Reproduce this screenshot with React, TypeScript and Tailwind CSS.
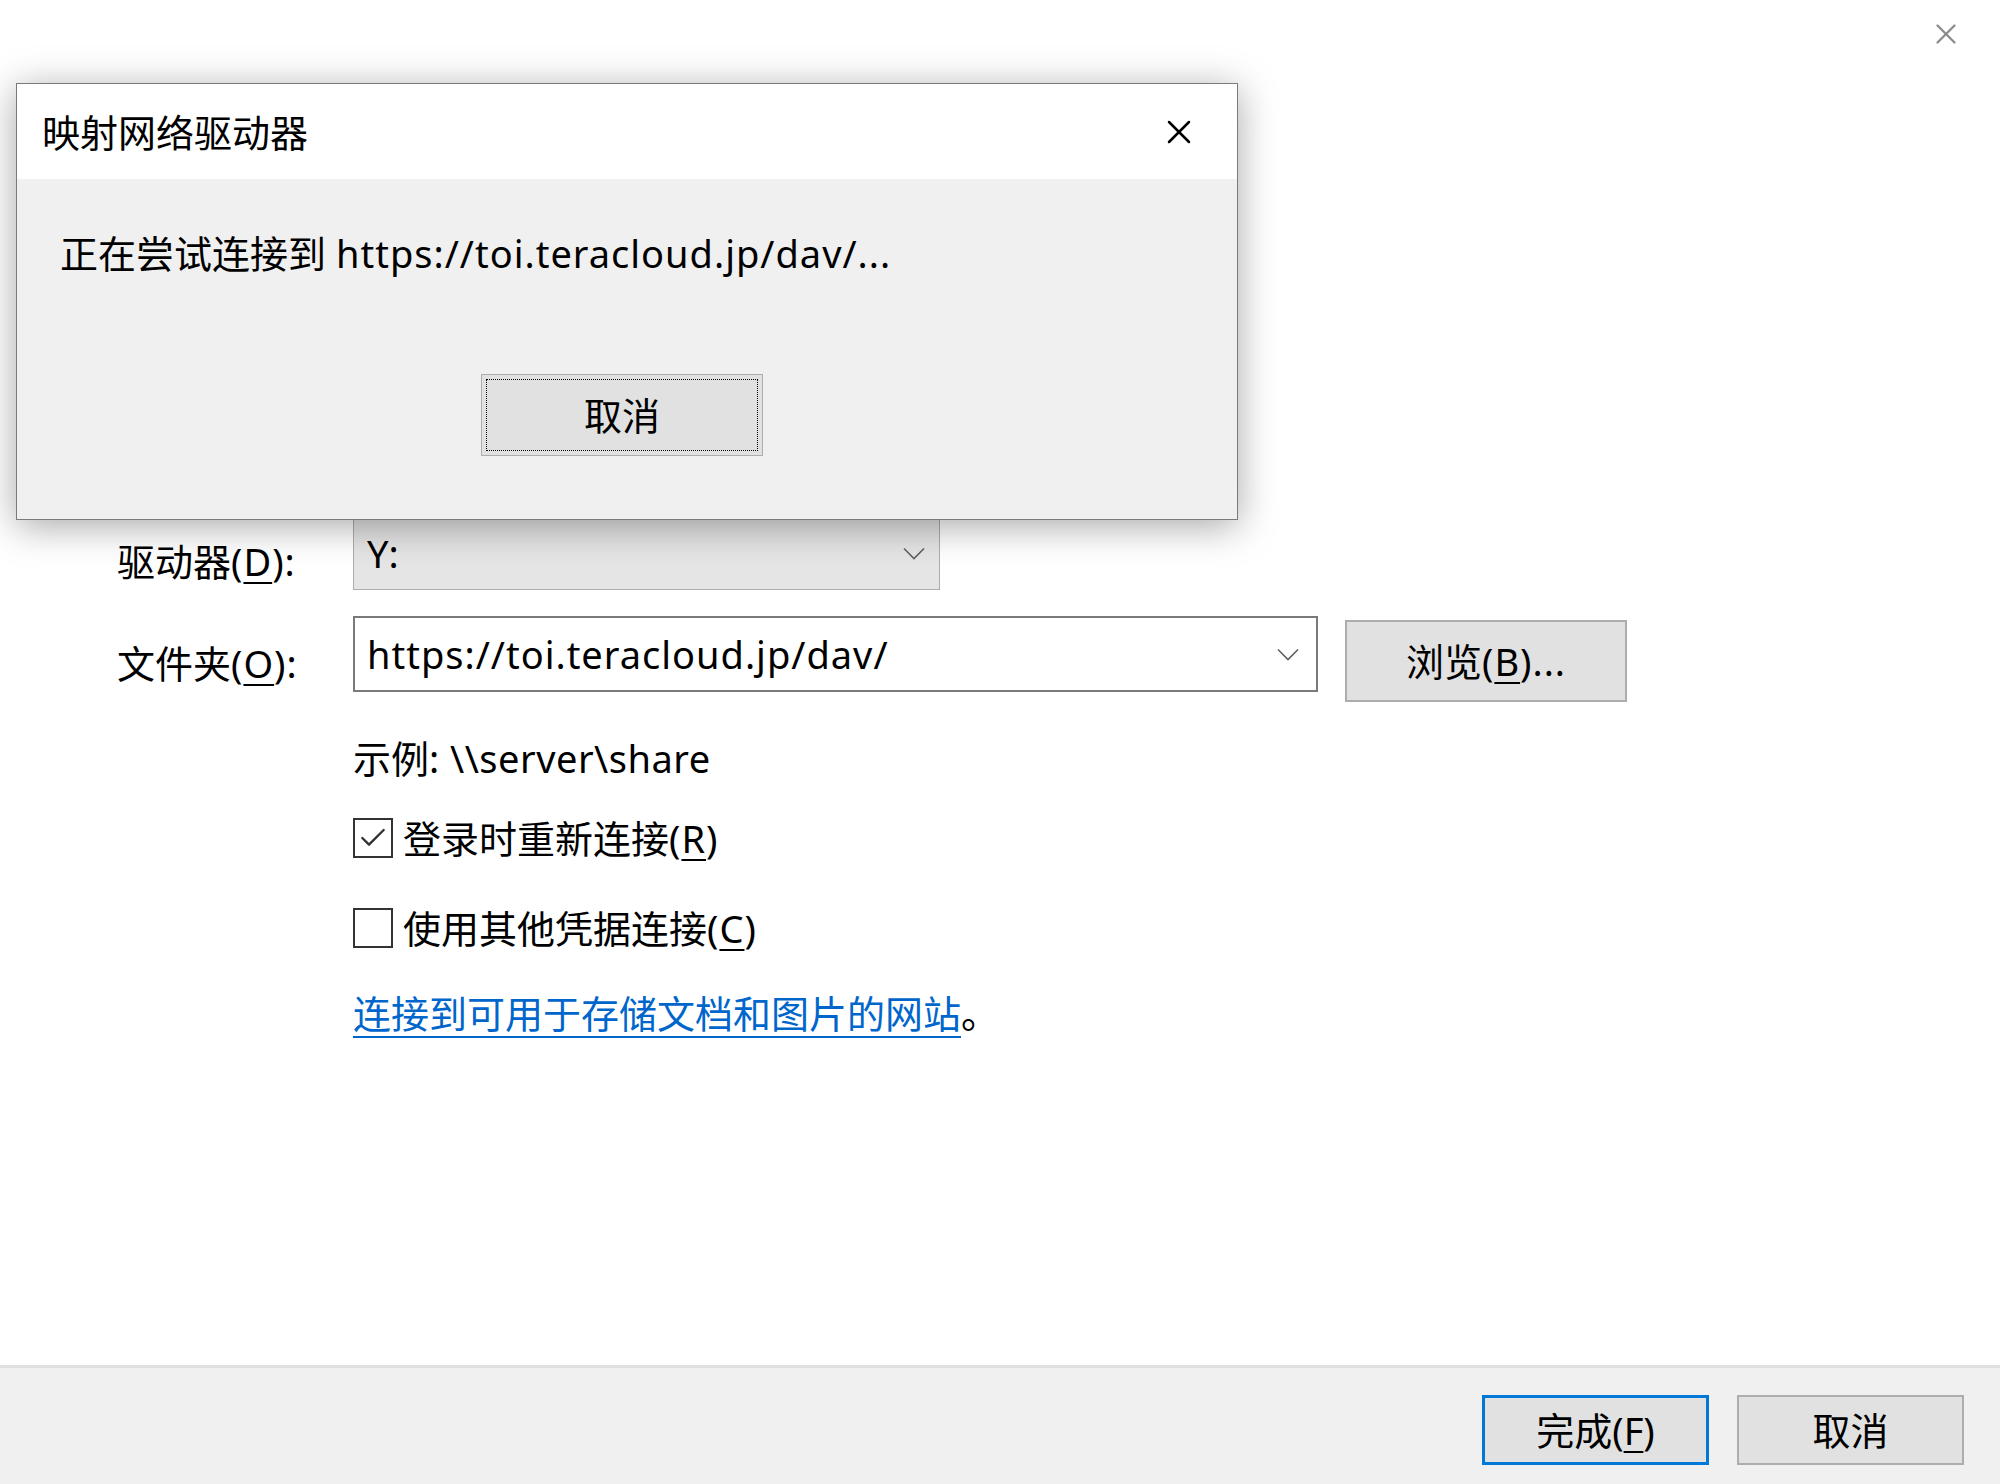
import { Check, X } from "lucide-react";

const font = "font-['Noto_Sans','Noto_Sans_CJK_SC',sans-serif]";

const Chevron = () => (
  <svg width="22" height="13" viewBox="0 0 22 13" fill="none">
    <path d="M1 1.5 L11 11.5 L21 1.5" stroke="#606060" strokeWidth="1.6" />
  </svg>
);

const CheckRow = ({ checked, label, hotkey }: { checked?: boolean; label: string; hotkey: string }) => (
  <div className="flex items-center gap-[10px] h-[40px]">
    <div className="w-[40px] h-[40px] border-[2px] border-[#333333] bg-white flex items-center justify-center">
      {checked && <Check size={32} strokeWidth={1.8} color="#333333" />}
    </div>
    <span className="text-[38px] leading-none text-black">
      {label}
      <span className="tracking-[1px]">
        (<span className="underline underline-offset-[6px] decoration-[2px]">{hotkey}</span>)
      </span>
    </span>
  </div>
);

export default function App() {
  return (
    <div className={`relative w-[2000px] h-[1484px] bg-white flex flex-col overflow-hidden ${font}`}>
      {/* window close */}
      <div className="h-[80px] flex justify-end pt-[17px] pr-[37px]">
        <X size={34} strokeWidth={1.6} color="#8a8a8a" />
      </div>

      {/* wizard body */}
      <div className="flex-1 pl-[117px] pt-[436px]">
        <div className="flex">
          <div className="w-[236px] h-[74px] pt-[16px] flex items-center text-[38px] leading-none text-black">
            驱动器
            <span className="tracking-[1px]">
              (<span className="underline underline-offset-[6px] decoration-[2px]">D</span>):
            </span>
          </div>
          <div className="w-[587px] h-[74px] bg-[#e5e5e5] border border-[#adadad] flex items-center justify-between pl-[13px] pr-[14px]">
            <span className="text-[38px] leading-none text-black">Y:</span>
            <Chevron />
          </div>
        </div>

        <div className="flex mt-[26px]">
          <div className="w-[236px] h-[76px] pt-[18px] flex items-center text-[38px] leading-none text-black">
            文件夹
            <span className="tracking-[1px]">
              (<span className="underline underline-offset-[6px] decoration-[2px]">O</span>):
            </span>
          </div>
          <div className="w-[965px] h-[76px] bg-white border-[2px] border-[#7a7a7a] flex items-center justify-between pl-[12px] pr-[17px]">
            <span className="text-[38px] leading-none text-black tracking-[1px]">https://toi.teracloud.jp/dav/</span>
            <Chevron />
          </div>
          <button className="ml-[27px] mt-[4px] w-[282px] h-[82px] bg-[#e1e1e1] border-[2px] border-[#adadad] text-[38px] leading-none text-black">
            浏览
            <span className="tracking-[1px]">
              (<span className="underline underline-offset-[6px] decoration-[2px]">B</span>)...
            </span>
          </button>
        </div>

        <div className="ml-[236px] flex flex-col">
          <div className="mt-[34px] h-[44px] flex items-center text-[38px] leading-none text-black">
            示例<span className="tracking-[0.5px]">: \\server\share</span>
          </div>
          <div className="mt-[38px]">
            <CheckRow checked label="登录时重新连接" hotkey="R" />
          </div>
          <div className="mt-[50px]">
            <CheckRow label="使用其他凭据连接" hotkey="C" />
          </div>
          <div className="mt-[43px] h-[44px] flex items-center text-[38px] leading-none">
            <span className="text-[#0066cc] underline underline-offset-[8px] decoration-[2px]">
              连接到可用于存储文档和图片的网站
            </span>
            <span className="text-black">。</span>
          </div>
        </div>
      </div>

      {/* footer */}
      <div className="h-[119px] border-t-[3px] border-[#e0e0e0] bg-[#f0f0f0] flex justify-end items-start pt-[27px] pr-[36px] gap-[28px]">
        <button className="w-[227px] h-[70px] bg-[#e1e1e1] border-[3px] border-[#0078d7] text-[38px] leading-none text-black">
          完成(<span className="underline underline-offset-[6px] decoration-[2px]">F</span>)
        </button>
        <button className="w-[227px] h-[70px] bg-[#e1e1e1] border-[2px] border-[#adadad] text-[38px] leading-none text-black">
          取消
        </button>
      </div>

      {/* progress dialog overlay */}
      <div className="absolute left-[16px] top-[83px] w-[1222px] h-[437px] border border-[#7a7a7a] bg-[#f0f0f0] shadow-[0_6px_36px_rgba(0,0,0,0.35)] flex flex-col">
        <div className="h-[95px] shrink-0 bg-white flex items-center justify-between pl-[25px] pr-[38px]">
          <span className="text-[38px] leading-none text-black">映射网络驱动器</span>
          <X size={40} strokeWidth={1.5} color="#000000" />
        </div>
        <div className="ml-[43px] mt-[50px] h-[48px] shrink-0 flex items-center text-[38px] leading-none text-black">
          正在尝试连接到 <span className="tracking-[1px] ml-[10px]">https://toi.teracloud.jp/dav/...</span>
        </div>
        <div className="flex justify-center pr-[10px] mt-[97px]">
          <button className="w-[282px] h-[82px] bg-[#e1e1e1] border border-[#adadad] p-[4px]">
            <div className="w-full h-full border border-dotted border-black flex items-center justify-center text-[38px] leading-none text-black">
              取消
            </div>
          </button>
        </div>
      </div>
    </div>
  );
}
